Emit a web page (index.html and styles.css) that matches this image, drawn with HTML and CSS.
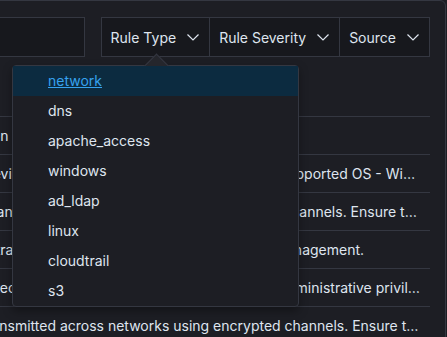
FILE: index.html
```html
<!DOCTYPE html>
<html lang="en">
<head>
<meta charset="utf-8">
<title>Rules</title>
<link rel="stylesheet" href="styles.css">
</head>
<body>
<div class="panel">
  <div class="toolbar">
    <div class="search"></div>
    <div class="filters">
      <button class="filter">Rule Type
        <svg class="chev" viewBox="0 0 12 7" width="12" height="7"><path d="M0.5 0.5 L6 6 L11.5 0.5" /></svg>
      </button>
      <button class="filter">Rule Severity
        <svg class="chev" viewBox="0 0 12 7" width="12" height="7"><path d="M0.5 0.5 L6 6 L11.5 0.5" /></svg>
      </button>
      <button class="filter">Source
        <svg class="chev" viewBox="0 0 12 7" width="12" height="7"><path d="M0.5 0.5 L6 6 L11.5 0.5" /></svg>
      </button>
    </div>
  </div>
  <div class="table">
    <div class="row head"><div class="cell">Description</div></div>
    <div class="row"><div class="cell">Enable logging on all domain controllers</div></div>
    <div class="row"><div class="cell">Check that all devices in this organization are running on a supported OS - Windows 10 or later.</div></div>
    <div class="row"><div class="cell">Sensitive data transmitted across networks over encrypted channels. Ensure that data is protected.</div></div>
    <div class="row"><div class="cell">Configure a centralized solution for audit and security log management.</div></div>
    <div class="row"><div class="cell">Monitor and protect all end user and shared accounts with administrative privileges.</div></div>
    <div class="row"><div class="cell">Data must be transmitted across networks using encrypted channels. Ensure that data is protected.</div></div>
  </div>
</div>
<div class="popover">
  <div class="arrow"></div>
  <ul class="options">
    <li class="option active"><a href="#">network</a></li>
    <li class="option">dns</li>
    <li class="option">apache_access</li>
    <li class="option">windows</li>
    <li class="option">ad_ldap</li>
    <li class="option">linux</li>
    <li class="option">cloudtrail</li>
    <li class="option">s3</li>
  </ul>
</div>
</body>
</html>
```
FILE: styles.css
```css
html, body {
  margin: 0;
  height: 100%;
  overflow: hidden;
  background: #1d1e24;
  font-family: Inter, "Noto Sans", sans-serif;
  font-size: 14px;
  color: #dfe5ef;
}

.panel {
  box-sizing: border-box;
  width: 466px;
  margin-left: -20px;
  height: 400px;
  border: 1px solid #343741;
  border-radius: 6px;
  padding: 16px 15px 0 0;
}

.toolbar {
  display: flex;
  gap: 16px;
  height: 40px;
}

.search {
  flex: 1;
  box-sizing: border-box;
  border: 1px solid #343741;
  background: #17181d;
}

.filters {
  display: flex;
  box-sizing: border-box;
  border: 1px solid #343741;
  background: #17181d;
}

.filter {
  display: flex;
  align-items: center;
  gap: 11px;
  padding: 0 10px 0 9px;
  border: 0;
  border-left: 1px solid #343741;
  background: transparent;
  color: #dfe5ef;
  font: inherit;
}

.filter:first-child {
  border-left: 0;
}

.chev {
  fill: none;
  stroke: #dfe5ef;
  stroke-width: 1.2;
}

.table {
  margin-left: -91px;
  width: 540px;
}

.row {
  height: 37px;
  border-bottom: 1px solid #343741;
  display: flex;
  align-items: center;
}

.row.head {
  height: 59px;
}

.cell {
  flex: 1;
  min-width: 0;
  padding-right: 8px;
  white-space: nowrap;
  overflow: hidden;
  text-overflow: ellipsis;
}

.popover {
  position: absolute;
  left: 12px;
  top: 65px;
  box-sizing: border-box;
  width: 287px;
  border: 1px solid #343741;
  border-radius: 4px;
  background: #1d1e24;
  box-shadow: 0 4px 10px rgba(0, 0, 0, 0.35);
}

.arrow {
  position: absolute;
  left: 135px;
  top: -9px;
  width: 16px;
  height: 16px;
  transform: rotate(45deg);
  background: #25262c;
  border-top: 1px solid #343741;
  border-left: 1px solid #343741;
}

.options {
  position: relative;
  list-style: none;
  margin: 0;
  padding: 0;
}

.option {
  height: 30px;
  line-height: 30px;
  padding-left: 35px;
}

.option.active {
  background: #0c2b40;
}

.option a {
  color: #36a2ef;
  text-decoration: underline;
}
```
